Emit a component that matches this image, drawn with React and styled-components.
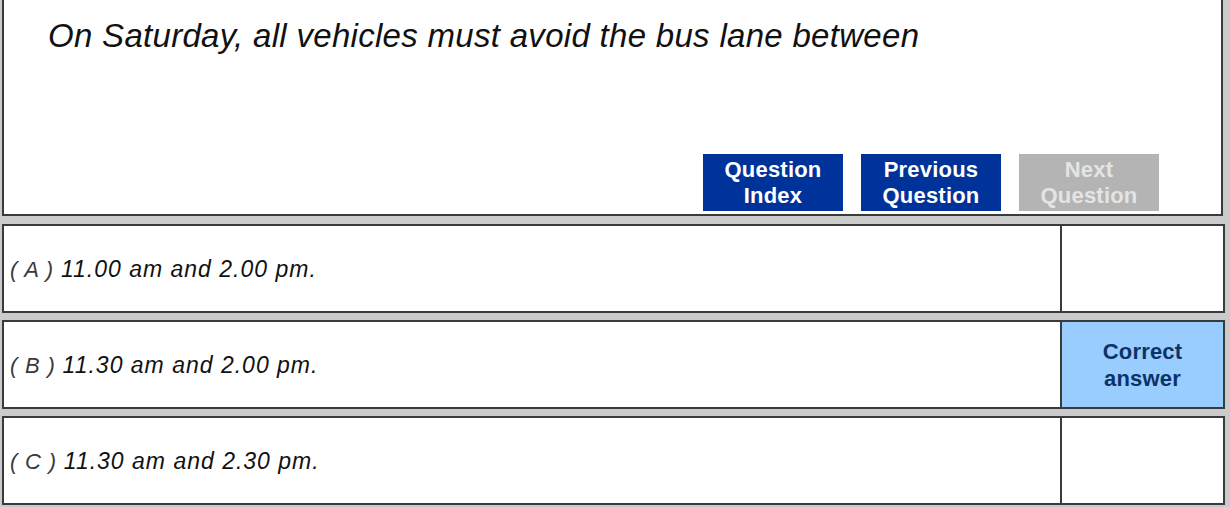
import React from 'react';
import styled, { createGlobalStyle } from 'styled-components';

const navBlue = "#003399";
const edge = "#3a3a3a";

const GlobalStyle = createGlobalStyle`
    html, body {
        margin: 0;
        padding: 0;
        background: #cbcbcb;
        font-family: "Liberation Sans", Arial, sans-serif;
    }
`;

const Page = styled.div`
    width: 1230px;
    height: 507px;
    overflow: hidden;
    display: flex;
    flex-direction: column;
    gap: 8px;
`;

const QuestionPanel = styled.div`
    height: 214px;
    margin: 0 7px 0 2px;
    background: white;
    border: 2px solid ${edge};
    border-top: none;
    display: flex;
    flex-direction: column;
    justify-content: space-between;
`;

const QuestionText = styled.p`
    margin: 0;
    padding: 17px 0 0 44px;
    font-size: 33px;
    letter-spacing: 0.3px;
    font-style: italic;
    color: #111;
`;

const NavBar = styled.div`
    display: flex;
    justify-content: flex-end;
    gap: 18px;
    padding: 0 62px 3px 0;
`;

const NavButton = styled.button`
    width: 140px;
    height: 57px;
    border: none;
    padding: 1px 0 0;
    background: ${p => (p.disabled ? "#b4b4b4" : navBlue)};
    color: ${p => (p.disabled ? "#e4e4e4" : "white")};
    font-family: "Liberation Sans", Arial, sans-serif;
    font-size: 22px;
    letter-spacing: 0.2px;
    font-weight: 700;
    line-height: 26px;
    cursor: ${p => (p.disabled ? "default" : "pointer")};
`;

const Answers = styled.div`
    display: flex;
    flex-direction: column;
    gap: 7px;
    margin: 0 5px 0 2px;
`;

const AnswerRow = styled.div`
    height: 85px;
    display: flex;
    background: white;
    border: 2px solid ${edge};
`;

const AnswerText = styled.div`
    flex: 1;
    display: flex;
    align-items: center;
    gap: 7px;
    padding: 2px 0 0 6px;
    font-style: italic;
    font-size: 23px;
    letter-spacing: 1px;
    color: #111;
`;

const Letter = styled.span`
    color: #3a3a3a;
    font-size: 22px;
    letter-spacing: 0.8px;
`;

const Verdict = styled.div`
    width: 161px;
    border-left: 2px solid ${edge};
    background: ${p => (p.correct ? "#99ccff" : "white")};
    color: #0d3366;
    font-size: 22px;
    letter-spacing: 0.2px;
    font-weight: 700;
    line-height: 27px;
    display: flex;
    align-items: center;
    justify-content: center;
    text-align: center;
`;

const answers = [
    { key: "A", text: "11.00 am and 2.00 pm." },
    { key: "B", text: "11.30 am and 2.00 pm.", correct: true },
    { key: "C", text: "11.30 am and 2.30 pm." },
];

const App = () => {
    return (
        <>
            <GlobalStyle />
            <Page>
                <QuestionPanel>
                    <QuestionText>On Saturday, all vehicles must avoid the bus lane between</QuestionText>
                    <NavBar>
                        <NavButton>Question<br />Index</NavButton>
                        <NavButton>Previous<br />Question</NavButton>
                        <NavButton disabled>Next<br />Question</NavButton>
                    </NavBar>
                </QuestionPanel>
                <Answers>
                    {answers.map(a => (
                        <AnswerRow key={a.key}>
                            <AnswerText>
                                <Letter>( {a.key} )</Letter>
                                {a.text}
                            </AnswerText>
                            <Verdict correct={a.correct}>
                                {a.correct && <>Correct<br />answer</>}
                            </Verdict>
                        </AnswerRow>
                    ))}
                </Answers>
            </Page>
        </>
    );
};

export default App;
